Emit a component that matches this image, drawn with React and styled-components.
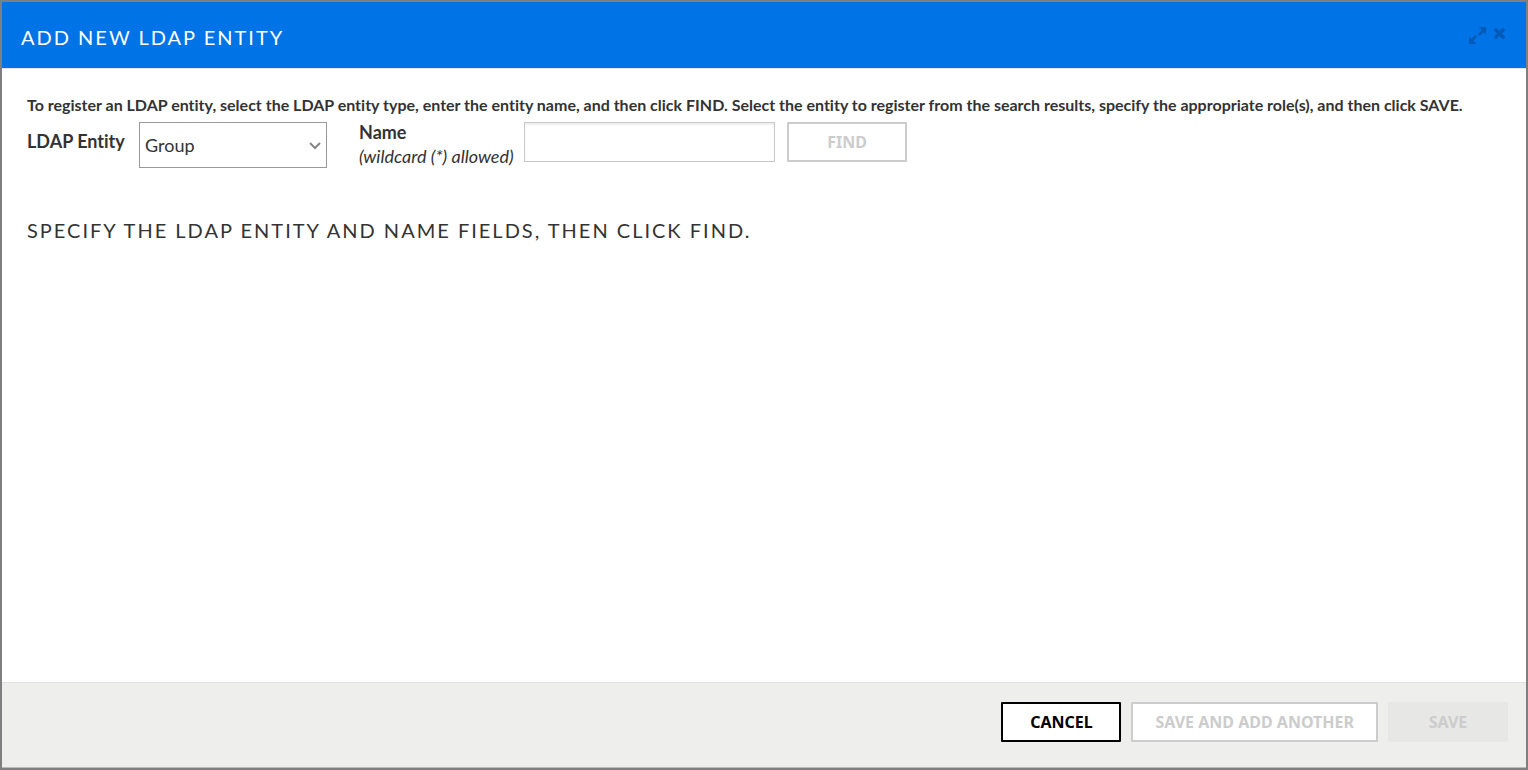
import { useState } from 'react';
import styled, { createGlobalStyle } from 'styled-components';

const GlobalStyle = createGlobalStyle`
    *, *::before, *::after {
        box-sizing: border-box;
    }

    body {
        margin: 0;
        color: #333333;
        background: #ffffff;
        font-family: Lato, 'Open Sans', sans-serif;
        font-size: 16px;
        font-variant-ligatures: none;
        line-height: 24px;
    }
`;

const Dialog = styled.div`
    min-height: 100vh;
    display: flex;
    flex-direction: column;
    border: 2px solid #7f7f7f;
`;

const Header = styled.header`
    display: flex;
    align-items: flex-start;
    justify-content: space-between;
    padding: 21px 20px 17px 19px;
    color: #ffffff;
    background: #0073e7;
`;

const Title = styled.h1`
    margin: 0;
    font-size: 20px;
    font-weight: 400;
    line-height: 28px;
    letter-spacing: 2px;
    text-transform: uppercase;
`;

const HeaderActions = styled.div`
    display: flex;
    align-items: flex-start;
    gap: 6px;
    padding-top: 4px;
`;

const IconButton = styled.button`
    display: flex;
    padding: 0;
    border: 0;
    color: #005bb8;
    background: none;
    cursor: pointer;
`;

const Body = styled.main`
    flex: 1;
    padding: 24px 25px;
    border-top: 1px solid #e5e5e5;
`;

const Intro = styled.p`
    margin: 0;
    font-weight: 700;
`;

const SearchForm = styled.form`
    display: flex;
    align-items: flex-start;
    flex-wrap: wrap;
    gap: 12px;
    margin-top: 5px;
`;

const Label = styled.label`
    font-size: 18px;
    font-weight: 700;
    line-height: 20px;
    white-space: nowrap;
`;

const EntityLabel = styled(Label)`
    width: 100px;
    padding-top: 9px;
`;

const NameLabel = styled(Label)`
    width: 153px;
    margin-left: 20px;
`;

const Hint = styled.em`
    display: block;
    font-weight: 400;
    line-height: 28px;
`;

const SelectWrap = styled.div`
    position: relative;
    width: 188px;

    svg {
        position: absolute;
        top: 20px;
        right: 6px;
        pointer-events: none;
    }
`;

const Select = styled.select`
    width: 100%;
    height: 46px;
    padding: 0 24px 0 5px;
    border: 1px solid #999999;
    border-radius: 0;
    color: #333333;
    background: #ffffff;
    font-family: inherit;
    font-size: 18px;
    appearance: none;
`;

const TextInput = styled.input`
    width: 251px;
    height: 40px;
    padding: 0 8px;
    border: 1px solid #c8c8c8;
    border-radius: 0;
    font: inherit;
    box-shadow: inset 0 2px 2px #eeeeee;
`;

const Button = styled.button`
    min-width: 120px;
    height: 40px;
    padding: 0 22px;
    border: 2px solid #000000;
    border-radius: 1px;
    color: #000000;
    background: #ffffff;
    font-family: 'Noto Sans', 'Open Sans', sans-serif;
    font-size: 16px;
    font-weight: 700;
    text-transform: uppercase;
    cursor: pointer;

    &:disabled {
        border-color: #cccccc;
        color: #cccccc;
        cursor: default;
    }
`;

const PrimaryButton = styled(Button)`
    &:disabled {
        border-color: #e7e7e6;
        background: #e7e7e6;
    }
`;

const Message = styled.h2`
    margin: 46px 0 0;
    font-size: 20px;
    font-weight: 400;
    line-height: 28px;
    letter-spacing: 2px;
    text-transform: uppercase;
`;

const Footer = styled.footer`
    display: flex;
    justify-content: flex-end;
    gap: 10px;
    padding: 19px 18px 25px;
    border-top: 1px solid #e2e2e2;
    border-bottom: 1px solid #bbbbbb;
    background: #eeeeec;
`;

const ExpandIcon = () => (
    <svg width='18' height='18' viewBox='0 0 18 18' fill='currentColor'>
        <path d='M9.500 0H17v7.500l-2.300-2.300-3.900 3.900-2-2 3.900-3.900z' />
        <path d='M0 17V9.500l2.300 2.300 3.900-3.900 2 2-3.900 3.900L7.500 17z' />
    </svg>
);

const CloseIcon = () => (
    <svg width='13' height='13' viewBox='0 0 13 13' fill='currentColor'>
        <path d='M3 0.500l3.500 3.500L10 0.500 12.500 3 9 6.500l3.500 3.500-2.500 2.500L6.500 9 3 12.500 0.500 10 4 6.500 0.500 3z' />
    </svg>
);

const ChevronIcon = () => (
    <svg width='12' height='8' viewBox='0 0 12 8' fill='none' stroke='#858585' strokeWidth='2'>
        <path d='M1 1l5 5 5-5' />
    </svg>
);

const App = () => {
    const [type, setType] = useState('Group');
    const [name, setName] = useState('');

    return (
        <>
            <GlobalStyle />
            <Dialog role='dialog' aria-labelledby='dialog-title'>
                <Header>
                    <Title id='dialog-title'>Add new LDAP entity</Title>
                    <HeaderActions>
                        <IconButton type='button' aria-label='Expand'>
                            <ExpandIcon />
                        </IconButton>
                        <IconButton type='button' aria-label='Close'>
                            <CloseIcon />
                        </IconButton>
                    </HeaderActions>
                </Header>
                <Body>
                    <Intro>
                        To register an LDAP entity, select the LDAP entity type, enter the
                        entity name, and then click FIND. Select the entity to register from
                        the search results, specify the appropriate role(s), and then click
                        SAVE.
                    </Intro>
                    <SearchForm onSubmit={(e) => e.preventDefault()}>
                        <EntityLabel htmlFor='entity-type'>LDAP Entity</EntityLabel>
                        <SelectWrap>
                            <Select
                                id='entity-type'
                                value={type}
                                onChange={(e) => setType(e.target.value)}
                            >
                                <option>Group</option>
                                <option>User</option>
                            </Select>
                            <ChevronIcon />
                        </SelectWrap>
                        <NameLabel htmlFor='entity-name'>
                            Name
                            <Hint>(wildcard (*) allowed)</Hint>
                        </NameLabel>
                        <TextInput
                            id='entity-name'
                            value={name}
                            onChange={(e) => setName(e.target.value)}
                        />
                        <Button type='submit' disabled={!name}>
                            Find
                        </Button>
                    </SearchForm>
                    <Message>Specify the LDAP entity and name fields, then click find.</Message>
                </Body>
                <Footer>
                    <Button type='button'>Cancel</Button>
                    <Button type='button' disabled>
                        Save and add another
                    </Button>
                    <PrimaryButton type='button' disabled>
                        Save
                    </PrimaryButton>
                </Footer>
            </Dialog>
        </>
    );
};

export default App;
